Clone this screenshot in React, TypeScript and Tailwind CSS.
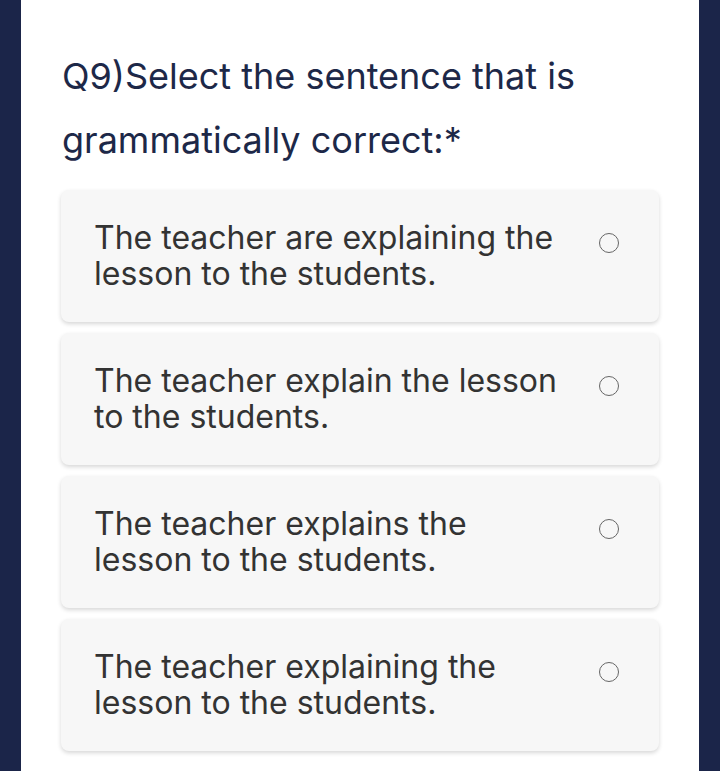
const options = [
  'The teacher are explaining the lesson to the students.',
  'The teacher explain the lesson to the students.',
  'The teacher explains the lesson to the students.',
  'The teacher explaining the lesson to the students.',
];

function RadioOption({ label }: { label: string }) {
  return (
    <label className="flex items-start rounded-lg bg-[#f7f7f7] pl-[33px] pr-[40px] py-[30px] shadow-[0_2px_4px_rgba(0,0,0,0.16)]">
      <span className="w-[468px] text-[32px] leading-[36px] text-[#333333]">{label}</span>
      <span className="ml-auto mt-[13px] h-5 w-5 shrink-0 rounded-full border-[1.5px] border-[#666666]" />
    </label>
  );
}

export default function App() {
  return (
    <div className="min-h-[771px] bg-[#1b2549] px-[21px] font-['Inter',sans-serif]">
      <div className="min-h-[771px] bg-white pl-[40px] pr-[40px] pt-[44px]">
        <h2 className="pl-[1px] text-[36px] leading-[64px] font-normal text-[#1d2848]">
          Q9)Select the sentence that is grammatically correct:*
        </h2>
        <div className="mt-[18px] flex flex-col gap-[11px]">
          {options.map((o) => (
            <RadioOption key={o} label={o} />
          ))}
        </div>
      </div>
    </div>
  );
}
